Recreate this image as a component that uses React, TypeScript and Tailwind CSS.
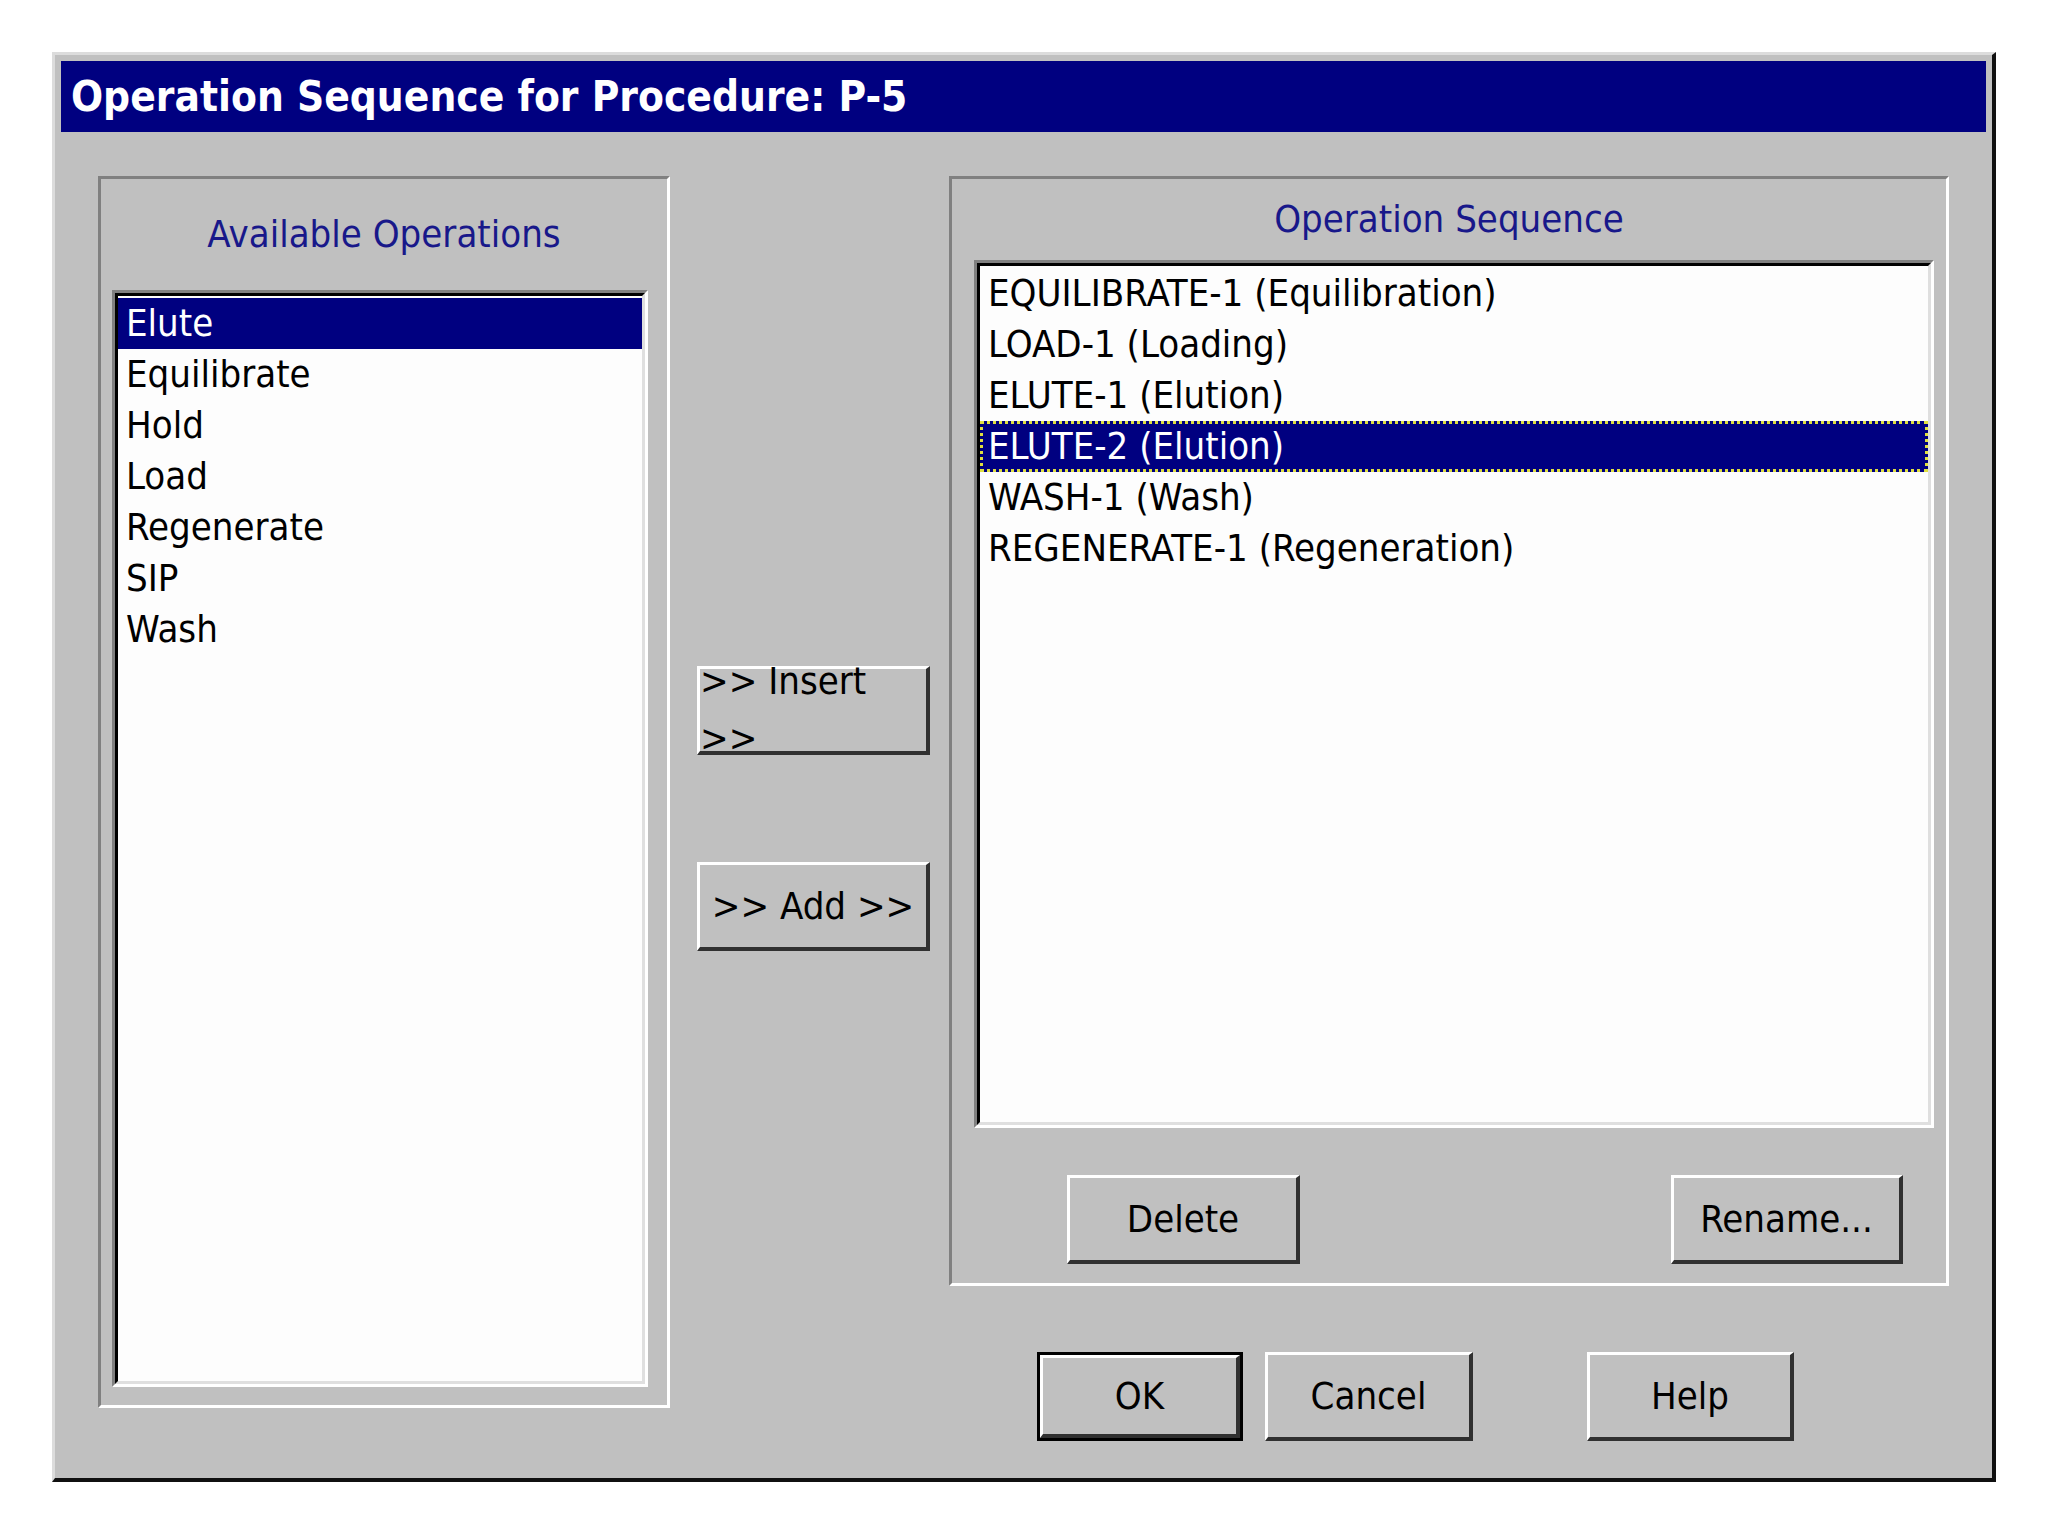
import React from "react";

const F = { fontFamily: '"DejaVu Sans Condensed", "Liberation Sans", sans-serif' };

function Btn({ label, w, def }: { label: string; w: number; def?: boolean }) {
  return (
    <div
      className={`h-[89px] flex items-center justify-center bg-[#c0c0c0] text-black text-[38px] ${def ? "border-[3px] border-black" : ""}`}
      style={{ width: w }}
    >
      <div className="w-full h-full flex items-center justify-center border-t-[3px] border-l-[3px] border-t-white border-l-white border-b-[4px] border-r-[4px] border-b-[#303030] border-r-[#303030]">
        {label}
      </div>
    </div>
  );
}

function ListBox({ items, sel, focus, w, h }: { items: string[]; sel: number; focus?: boolean; w: number; h: number }) {
  return (
    <div
      className="border-t-[3px] border-l-[3px] border-t-[#808080] border-l-[#808080] border-b-[3px] border-r-[3px] border-b-white border-r-white"
      style={{ width: w, height: h }}
    >
      <div className="w-full h-full bg-[#fdfdfd] border-t-[3px] border-l-[3px] border-t-black border-l-black border-b-[3px] border-r-[3px] border-b-[#dfdfdf] border-r-[#dfdfdf] py-[2px]">
        {items.map((t, i) => (
          <div
            key={t}
            className={`h-[51px] leading-[51px] px-[8px] text-[38px] whitespace-nowrap ${
              i === sel ? "bg-[#000080] text-white" : "text-black"
            } ${i === sel && focus ? "outline-[3px] outline-dotted outline-[#e0e040] -outline-offset-[3px]" : ""}`}
          >
            {t}
          </div>
        ))}
      </div>
    </div>
  );
}

export default function App() {
  return (
    <div className="w-[2048px] h-[1536px] bg-white pt-[52px] pl-[52px]" style={F}>
      <div className="w-[1944px] h-[1430px] bg-[#c0c0c0] border-t-[3px] border-l-[3px] border-t-[#dcdcdc] border-l-[#dcdcdc] border-b-[4px] border-r-[4px] border-b-[#101010] border-r-[#101010] p-[6px]">
        <div className="h-[71px] bg-[#000080] text-white font-bold text-[42px] leading-[71px] pl-[10px]">
          Operation Sequence for Procedure: P-5
        </div>
        <div className="flex items-start pl-[37px] pt-[44px]">
          {/* Left group */}
          <div className="w-[572px] h-[1232px] border-t-[3px] border-l-[3px] border-t-[#808080] border-l-[#808080] border-b-[3px] border-r-[3px] border-b-white border-r-white pl-[11px]">
            <div className="h-[111px] flex items-center justify-center text-[#18188a] text-[38px] pr-[11px]">
              Available Operations
            </div>
            <ListBox
              items={["Elute", "Equilibrate", "Hold", "Load", "Regenerate", "SIP", "Wash"]}
              sel={0}
              w={536}
              h={1097}
            />
          </div>
          {/* Middle */}
          <div className="ml-[27px] pt-[490px] flex flex-col gap-[107px]">
            <Btn label=">> Insert >>" w={233} />
            <Btn label=">> Add >>" w={233} />
          </div>
          {/* Right */}
          <div className="ml-[19px] flex flex-col">
            <div className="w-[1000px] h-[1110px] border-t-[3px] border-l-[3px] border-t-[#808080] border-l-[#808080] border-b-[3px] border-r-[3px] border-b-white border-r-white pl-[22px]">
              <div className="h-[81px] flex items-center justify-center text-[#18188a] text-[38px] pr-[22px]">
                Operation Sequence
              </div>
              <ListBox
                items={[
                  "EQUILIBRATE-1 (Equilibration)",
                  "LOAD-1 (Loading)",
                  "ELUTE-1 (Elution)",
                  "ELUTE-2 (Elution)",
                  "WASH-1 (Wash)",
                  "REGENERATE-1 (Regeneration)",
                ]}
                sel={3}
                focus
                w={960}
                h={868}
              />
              <div className="flex mt-[47px] pl-[93px]">
                <Btn label="Delete" w={233} />
                <div className="w-[371px]" />
                <Btn label="Rename..." w={232} />
              </div>
            </div>
            <div className="flex mt-[66px] pl-[88px]">
              <Btn label="OK" w={206} def />
              <div className="w-[22px]" />
              <Btn label="Cancel" w={208} />
              <div className="w-[114px]" />
              <Btn label="Help" w={207} />
            </div>
          </div>
        </div>
      </div>
    </div>
  );
}
